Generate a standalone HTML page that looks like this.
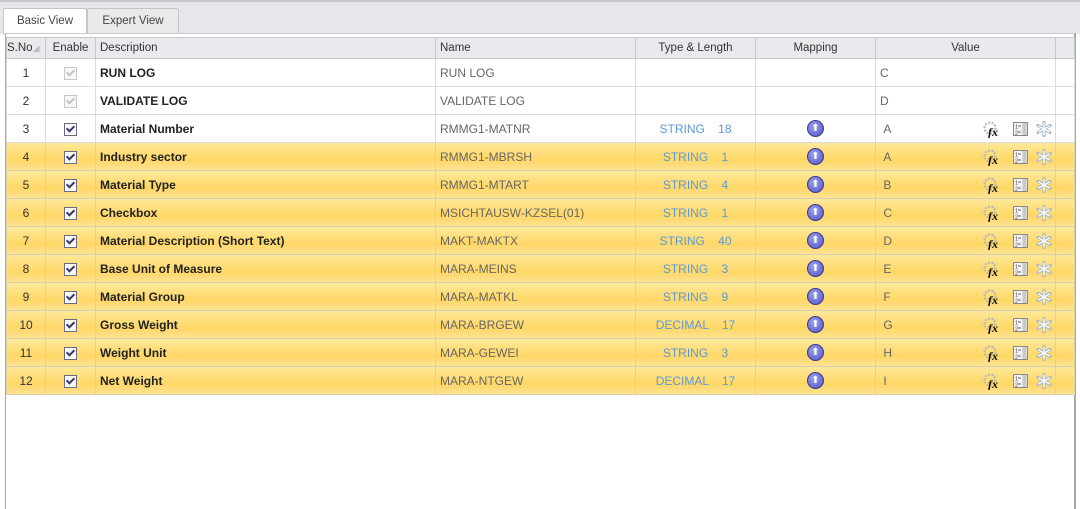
<!DOCTYPE html><html><head><style>
body{margin:0;width:1080px;height:509px;background:#fff;font-family:"Liberation Sans",sans-serif;font-size:12px;color:#333;position:relative;overflow:hidden}
.top{position:absolute;left:0;top:0;width:1080px;height:34px;background:#e6e7ea;border-top:2px solid #c7c8cc;box-sizing:border-box}
.tab{position:absolute;top:8px;height:25px;line-height:24px;text-align:center;font-size:11.5px;color:#444;border:1px solid #c3c5c9;border-bottom:none;border-radius:2px 2px 0 0}
.frame{position:absolute;left:5px;top:33px;width:1071px;height:476px;border-left:1px solid #a8a8a8;border-right:2px solid #a8a8a8;border-top:1px solid #c9c9c9;background:#fff;box-sizing:border-box}
table{position:absolute;left:6px;top:37px;border-collapse:collapse;table-layout:fixed}
td{border:1px solid #dcdcdc;height:27px;padding:0 4px;white-space:nowrap;overflow:hidden;position:relative}
th{height:20px;border:1px solid #c5c8cc;background:#e8eaed;font-weight:normal;font-size:11.5px;color:#333;padding:0 4px}
tr.y td{background:linear-gradient(#ffe89a,#ffd766 60%,#ffe394);border-color:#d8cfae #e0d2a0}
tr.y td{border-top:1px solid #c9c3b3}
.c{text-align:center}
.b{font-weight:bold;color:#222}
.n{color:#666}
.t{color:#5a9ad8;text-align:center}
.cb{display:inline-block;width:11px;height:11px;border:1px solid #6b6b80;background:#f8f8fb;vertical-align:middle;position:relative}
.cb.g{border-color:#c8c8c8}
.cb::after{content:"";position:absolute;left:3px;top:0px;width:3px;height:6px;border:solid #3a3a70;border-width:0 2px 2px 0;transform:rotate(45deg)}
.cb.g::after{border-color:#c4c4c4}
.m{display:inline-block;width:15px;height:15px;border-radius:50%;background:radial-gradient(circle at 40% 35%,#9aa0f0,#5353c0);border:1px solid #3a3a90;position:relative;vertical-align:middle}
.m::after{content:"⬆";position:absolute;left:0;right:0;top:0;text-align:center;color:#fff;font-size:10px;line-height:15px}
.ic{position:absolute;left:104px;top:5px;width:72px;height:18px}
</style></head><body>
<div class="top"></div>
<div class="tab" style="left:3px;width:82px;background:#fff;height:26px">Basic View</div>
<div class="tab" style="left:87px;width:90px;background:#e9eaec">Expert View</div>
<div class="frame"></div>
<table>
<colgroup><col style="width:39px"><col style="width:50px"><col style="width:340px"><col style="width:200px"><col style="width:120px"><col style="width:120px"><col style="width:180px"><col style="width:19px"></colgroup>
<tr><th style="text-align:left;padding:0">S.No<span style="color:#bbb;font-size:9px">◢</span></th><th class="c">Enable</th><th style="text-align:left">Description</th><th style="text-align:left">Name</th><th>Type &amp; Length</th><th>Mapping</th><th>Value</th><th></th></tr>
<tr><td class="c">1</td><td class="c"><span class="cb g"></span></td><td class="b">RUN LOG</td><td class="n">RUN LOG</td><td></td><td></td><td class="n">C</td><td></td></tr>
<tr><td class="c">2</td><td class="c"><span class="cb g"></span></td><td class="b">VALIDATE LOG</td><td class="n">VALIDATE LOG</td><td></td><td></td><td class="n">D</td><td></td></tr>
<tr><td class="c">3</td><td class="c"><span class="cb"></span></td><td class="b">Material Number</td><td class="n">RMMG1-MATNR</td><td class="t">STRING &nbsp;&nbsp; 18</td><td class="c"><span class="m"></span></td><td class="n">&nbsp;A<span class="ic"><svg width="72" height="18"><circle cx="10" cy="8" r="5.5" fill="none" stroke="#b8b8b8" stroke-width="2.2" stroke-dasharray="2 1.4"/><text x="8" y="16" font-size="12" font-style="italic" font-weight="bold" font-family="Liberation Serif" fill="#111">fx</text><rect x="33.5" y="2.5" width="14" height="13" fill="#f4f4f4" stroke="#888"/><text x="35" y="8.5" font-size="5.5" fill="#444">1</text><text x="35" y="14.5" font-size="5.5" fill="#444">2</text><line x1="38" y1="6" x2="41" y2="6" stroke="#666"/><line x1="38" y1="12" x2="41" y2="12" stroke="#666"/><rect x="42.5" y="3" width="4" height="12" fill="#c8c8c8"/><g stroke="#9cb0c4" stroke-width="3" stroke-linecap="round"><line x1="64" y1="2.5" x2="64" y2="15.5"/><line x1="58" y1="5.5" x2="70" y2="12.5"/><line x1="58" y1="12.5" x2="70" y2="5.5"/></g><g stroke="#fff" stroke-width="1.4" stroke-linecap="round"><line x1="64" y1="3" x2="64" y2="15"/><line x1="58.5" y1="6" x2="69.5" y2="12"/><line x1="58.5" y1="12" x2="69.5" y2="6"/></g></svg></span></td><td></td></tr>
</table>
<script>
var rows=[["4","Industry sector","RMMG1-MBRSH","STRING","1","A"],["5","Material Type","RMMG1-MTART","STRING","4","B"],["6","Checkbox","MSICHTAUSW-KZSEL(01)","STRING","1","C"],["7","Material Description (Short Text)","MAKT-MAKTX","STRING","40","D"],["8","Base Unit of Measure","MARA-MEINS","STRING","3","E"],["9","Material Group","MARA-MATKL","STRING","9","F"],["10","Gross Weight","MARA-BRGEW","DECIMAL","17","G"],["11","Weight Unit","MARA-GEWEI","STRING","3","H"],["12","Net Weight","MARA-NTGEW","DECIMAL","17","I"]];
var t=document.querySelector("table tbody")||document.querySelector("table");
var ic=document.querySelector(".ic").outerHTML;
rows.forEach(function(r){var tr=document.createElement("tr");tr.className="y";tr.innerHTML='<td class="c">'+r[0]+'</td><td class="c"><span class="cb"></span></td><td class="b">'+r[1]+'</td><td class="n">'+r[2]+'</td><td class="t">'+r[3]+' &nbsp;&nbsp; '+r[4]+'</td><td class="c"><span class="m"></span></td><td class="n">&nbsp;'+r[5]+ic+'</td><td></td>';t.appendChild(tr);});
</script>
</body></html>
